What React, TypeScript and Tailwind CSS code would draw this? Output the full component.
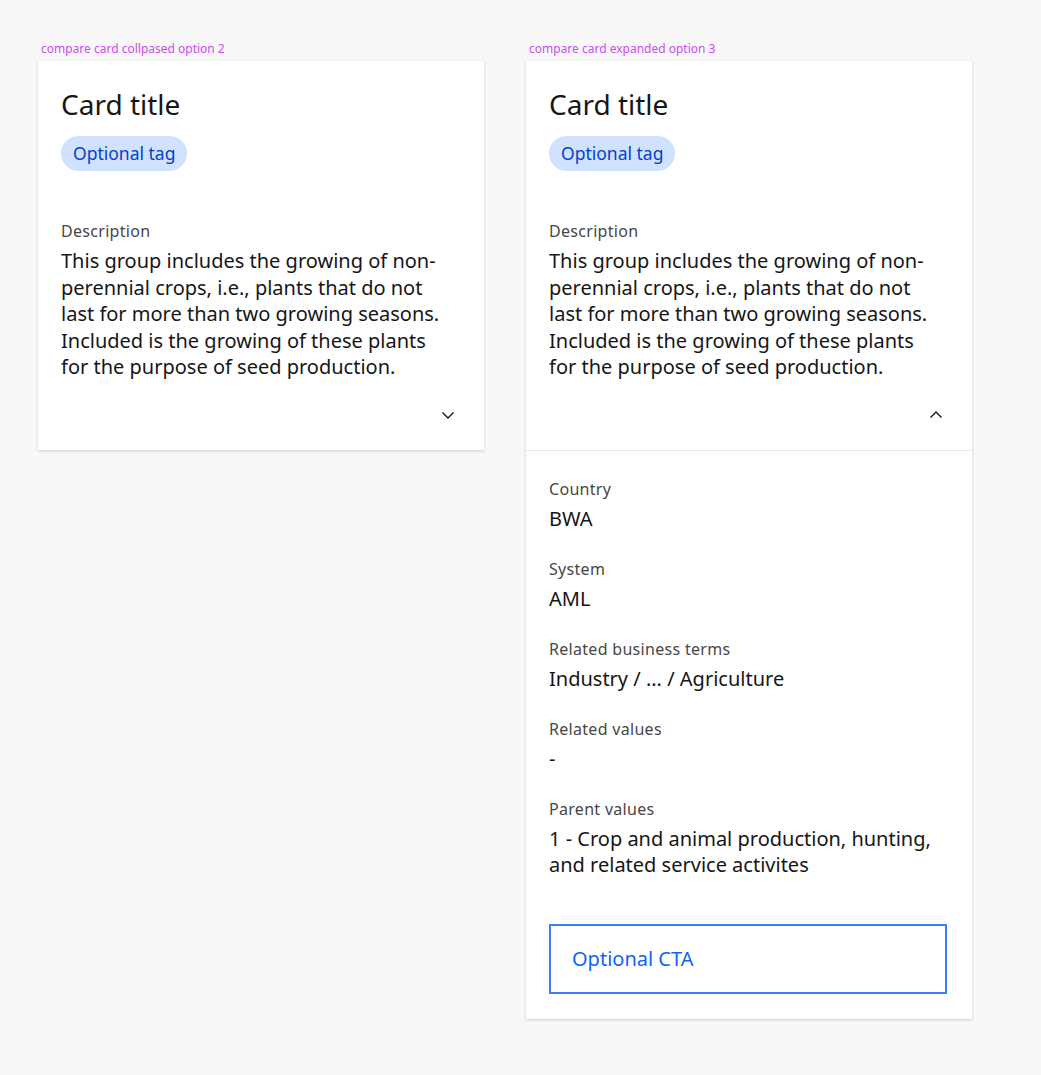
import React from 'react';

const font = { fontFamily: '"Noto Sans", "Open Sans", sans-serif' };

interface Field {
    label: string;
    value: string;
}

const fields: Field[] = [
    { label: 'Country', value: 'BWA' },
    { label: 'System', value: 'AML' },
    { label: 'Related business terms', value: 'Industry / ... / Agriculture' },
    { label: 'Related values', value: '-' },
    { label: 'Parent values', value: '1 - Crop and animal production, hunting, and related service activites' },
];

function Chevron({ up }: { up?: boolean }) {
    return (
        <svg width="16" height="16" viewBox="0 0 16 16" fill="none" className="text-[#161616]">
            {up ? (
                <path d="M2.5 10.5 L8 5 L13.5 10.5" stroke="currentColor" strokeWidth="1.4" />
            ) : (
                <path d="M2.5 5.5 L8 11 L13.5 5.5" stroke="currentColor" strokeWidth="1.4" />
            )}
        </svg>
    );
}

function CardHeader({ expanded }: { expanded?: boolean }) {
    return (
        <div className={`px-[23px] pt-[25px] pb-[27px] ${expanded ? 'border-b border-[#e8e8e8]' : ''}`}>
            <h2 className="text-[28px] leading-[36px] text-[#161616] font-normal">Card title</h2>
            <div className="mt-[14px] flex">
                <span className="h-[35px] px-[12px] rounded-full bg-[#d0e2ff] text-[#0043ce] text-[17.5px] flex items-center">
                    Optional tag
                </span>
            </div>
            <p className="mt-[49px] text-[16px] leading-[22px] text-[#474747] tracking-[0.3px]">Description</p>
            <p className="mt-[6px] text-[20px] leading-[26.5px] text-[#161616] pr-[20px]">
                This group includes the growing of non-perennial crops, i.e., plants that do not last for more than two growing seasons. Included is the growing of these plants for the purpose of seed production.
            </p>
            <div className="mt-[26px] flex justify-end pr-[5px]">
                <Chevron up={expanded} />
            </div>
        </div>
    );
}

export default function App() {
    return (
        <div className="min-h-[1075px] bg-[#f8f8f8] pt-[42px] pl-[38px]" style={font}>
            <div className="flex gap-[42px] items-start">
                {/* collapsed */}
                <div className="w-[446px]">
                    <p className="pl-[3px] text-[12px] leading-[14px] text-[#cc4cf0] mb-[5px]">compare card collpased option 2</p>
                    <div className="bg-white shadow-[0_1px_3px_rgba(0,0,0,0.18)]">
                        <CardHeader />
                    </div>
                </div>

                {/* expanded */}
                <div className="w-[446px]">
                    <p className="pl-[3px] text-[12px] leading-[14px] text-[#cc4cf0] mb-[5px]">compare card expanded option 3</p>
                    <div className="bg-white shadow-[0_1px_3px_rgba(0,0,0,0.18)]">
                        <CardHeader expanded />
                        <div className="px-[23px] pt-[27px] pb-[25px]">
                            <div className="flex flex-col gap-[26px]">
                                {fields.map((f) => (
                                    <div key={f.label}>
                                        <p className="text-[16px] leading-[22px] text-[#474747] tracking-[0.3px]">{f.label}</p>
                                        <p className="mt-[6px] text-[20px] leading-[26px] text-[#161616]">{f.value}</p>
                                    </div>
                                ))}
                            </div>
                            <button className="mt-[46px] w-[398px] h-[70px] border-2 border-[#3e7bf7] text-left pl-[21px] text-[20px] text-[#0f62fe]">
                                Optional CTA
                            </button>
                        </div>
                    </div>
                </div>
            </div>
        </div>
    );
}
